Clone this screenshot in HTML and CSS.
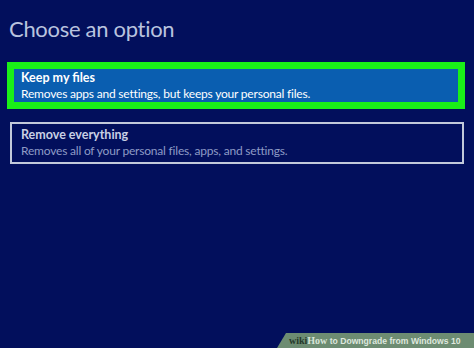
FILE: index.html
```html
<!DOCTYPE html>
<html lang="en">

<head>
    <meta charset="UTF-8">
    <meta name="viewport" content="width=device-width, initial-scale=1.0">
    <title>Choose an option</title>
    <link rel="stylesheet" href="styles.css">
</head>

<body>

    <div class="screen">
        <h1 class="title">Choose an option</h1>

        <div class="options">
            <div class="highlight">
                <div class="option selected">
                    <h4>Keep my files</h4>
                    <p>Removes apps and settings, but keeps your personal files.</p>
                </div>
            </div>

            <div class="option outlined">
                <h4>Remove everything</h4>
                <p>Removes all of your personal files, apps, and settings.</p>
            </div>
        </div>
    </div>

    <div class="watermark">
        <span class="wiki">wiki</span><span class="how">How</span> to Downgrade from Windows 10
    </div>

</body>

</html>
```

FILE: styles.css
```css
* {
    box-sizing: border-box;
    margin: 0;
    padding: 0;
    font-family: Lato, "Open Sans", sans-serif;
}

body {
    width: 474px;
    height: 348px;
    overflow: hidden;
    background-color: #020f5c;
    position: relative;
}

.screen {
    padding: 14px 0 0 0;
}

.title {
    font-size: 22px;
    font-weight: 400;
    color: #b9c3df;
    margin-left: 9px;
    line-height: 30px;
    letter-spacing: -0.3px;
}

.options {
    display: flex;
    flex-direction: column;
    margin-top: 18px;
    gap: 13px;
}

.highlight {
    margin-left: 7px;
    width: 458px;
    height: 47px;
    border: 7px solid #1af018;
    background-color: #0a5eb0;
    display: flex;
}

.option {
    padding: 2px 0 0 7px;
}

.option h4 {
    font-size: 12.5px;
    font-weight: 700;
    line-height: 16px;
}

.option p {
    font-size: 12px;
    line-height: 16px;
    letter-spacing: -0.2px;
}

.selected {
    width: 100%;
    color: #ffffff;
    background-color: #0a5eb0;
    padding-top: 1px;
}

.outlined {
    margin-left: 10px;
    width: 454px;
    height: 42px;
    border: 2px solid #c2c9da;
    padding: 3px 0 0 9px;
}

.outlined h4 {
    color: #c9d0e4;
}

.outlined p {
    color: #8e9bc6;
}

.watermark {
    position: absolute;
    right: 0;
    bottom: 0;
    width: 197px;
    height: 15px;
    background-color: #6d8c72;
    clip-path: polygon(9px 0, 100% 0, 100% 100%, 0 100%);
    font-family: "Liberation Sans", Arial, sans-serif;
    font-size: 8.6px;
    font-weight: 700;
    color: #dfe8df;
    line-height: 15px;
    padding-left: 12px;
    white-space: nowrap;
}

.wiki {
    color: #26392a;
    font-family: "Liberation Serif", serif;
    font-size: 10px;
}

.how {
    color: #d8e4d8;
    font-family: "Liberation Serif", serif;
    font-size: 10px;
}
```
